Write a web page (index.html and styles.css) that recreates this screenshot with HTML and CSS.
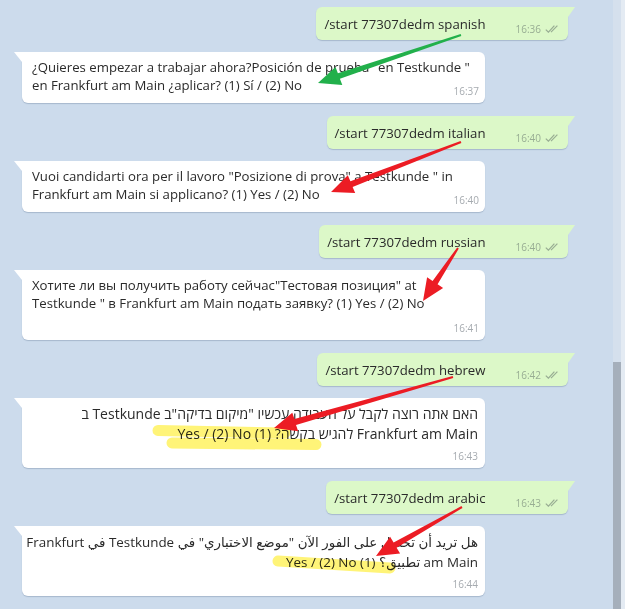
FILE: index.html
```html
<!DOCTYPE html>
<html lang="en">
<head>
<meta charset="utf-8">
<title>Chat</title>
<link rel="stylesheet" href="styles.css">
</head>
<body>
<div class="window">
  <main class="chat">
    <div class="row out first">
      <div class="bubble bubble-out"><span class="text">/start 77307dedm spanish</span><span class="meta"><span class="time">16:36</span><svg class="checks" viewBox="0 0 15 8"><path d="M0.8 4.6 L3.4 7.2 L9.4 0.6 M6 7.2 L12.4 0.6"/></svg></span></div>
    </div>
    <div class="row in">
      <div class="bubble bubble-in">
        <div class="line">¿Quieres empezar a trabajar ahora?Posición de prueba" en Testkunde "</div>
        <div class="line last"><span>en Frankfurt am Main ¿aplicar? (1) Sí / (2) No</span><span class="time">16:37</span></div>
      </div>
    </div>

    <div class="row out">
      <div class="bubble bubble-out"><span class="text">/start 77307dedm italian</span><span class="meta"><span class="time">16:40</span><svg class="checks" viewBox="0 0 15 8"><path d="M0.8 4.6 L3.4 7.2 L9.4 0.6 M6 7.2 L12.4 0.6"/></svg></span></div>
    </div>
    <div class="row in">
      <div class="bubble bubble-in">
        <div class="line">Vuoi candidarti ora per il lavoro "Posizione di prova" a Testkunde " in</div>
        <div class="line last"><span>Frankfurt am Main si applicano? (1) Yes / (2) No</span><span class="time">16:40</span></div>
      </div>
    </div>

    <div class="row out">
      <div class="bubble bubble-out"><span class="text">/start 77307dedm russian</span><span class="meta"><span class="time">16:40</span><svg class="checks" viewBox="0 0 15 8"><path d="M0.8 4.6 L3.4 7.2 L9.4 0.6 M6 7.2 L12.4 0.6"/></svg></span></div>
    </div>
    <div class="row in">
      <div class="bubble bubble-in tall">
        <div class="line">Хотите ли вы получить работу сейчас"Тестовая позиция" at</div>
        <div class="line">Testkunde " в Frankfurt am Main подать заявку? (1) Yes / (2) No</div>
        <div class="time-row"><span class="time">16:41</span></div>
      </div>
    </div>

    <div class="row out">
      <div class="bubble bubble-out"><span class="text">/start 77307dedm hebrew</span><span class="meta"><span class="time">16:42</span><svg class="checks" viewBox="0 0 15 8"><path d="M0.8 4.6 L3.4 7.2 L9.4 0.6 M6 7.2 L12.4 0.6"/></svg></span></div>
    </div>
    <div class="row in">
      <div class="bubble bubble-in tall rtl-bubble">
        <div class="rtl rtl-he" dir="rtl" lang="he">
          <div class="line">האם אתה רוצה לקבל על העבודה עכשיו "מיקום בדיקה"ב Testkunde ב</div>
          <div class="line">Frankfurt am Main להגיש בקשה? (1) Yes / (2) No</div>
        </div>
        <div class="time-row"><span class="time">16:43</span></div>
      </div>
    </div>

    <div class="row out">
      <div class="bubble bubble-out"><span class="text">/start 77307dedm arabic</span><span class="meta"><span class="time">16:43</span><svg class="checks" viewBox="0 0 15 8"><path d="M0.8 4.6 L3.4 7.2 L9.4 0.6 M6 7.2 L12.4 0.6"/></svg></span></div>
    </div>
    <div class="row in">
      <div class="bubble bubble-in tall rtl-bubble">
        <div class="rtl rtl-ar" dir="rtl" lang="ar">
          <div class="line">هل تريد أن تحصل على الفور الآن "موضع الاختباري" في Testkunde في  Frankfurt</div>
          <div class="line">am Main تطبيق؟ (1) Yes / (2) No</div>
        </div>
        <div class="time-row"><span class="time">16:44</span></div>
      </div>
    </div>
  </main>

  <div class="scrollbar">
    <div class="track"></div>
    <div class="thumb"></div>
  </div>
  <div class="edge"></div>

  <svg class="annotations" viewBox="0 0 625 609" aria-hidden="true">
    <g class="marker">
      <path d="M158 430.5 L285 433"/>
      <path d="M172 443 L316 444.5"/>
      <path d="M278 561 L390 568"/>
    </g>
    <polygon class="arrow-green" points="460.7,34 337.9,73.2 335.5,67 318,83 342.3,85 339.9,78.8 461.3,36"/>
    <polygon class="arrow-red" points="460.6,141.1 350.4,181.3 347.8,175.2 331,192 355.2,193 352.6,186.9 461.4,142.9"/>
    <polygon class="arrow-red" points="457.2,247.4 432.6,281 427.1,277.2 423,301 443.1,288 437.6,284.3 458.8,248.6"/>
    <polygon class="arrow-red" points="452.7,376 294.4,419.1 292.3,412.8 274,428 298.2,431.2 296,424.9 453.3,378"/>
    <polygon class="arrow-red" points="461.5,506.1 393.6,542.5 390.1,536.8 376,556 400.1,553.4 396.6,547.7 462.5,507.9"/>
  </svg>
</div>
</body>
</html>
```

FILE: styles.css
```css
html, body {
  margin: 0;
  padding: 0;
  height: 100%;
}

body {
  font-family: "Open Sans", "DejaVu Sans", sans-serif;
  font-size: 13.2px;
  color: #2a2a2a;
  background: #ccdbec;
  overflow: hidden;
}

.window {
  position: relative;
  display: flex;
  width: 625px;
  height: 609px;
}

.chat {
  flex: 1;
  display: flex;
  flex-direction: column;
  padding-top: 7px;
  min-width: 0;
}

.row {
  display: flex;
}

.row.out {
  justify-content: flex-end;
  padding-right: 45px;
  margin-top: 13px;
}

.row.out.first {
  margin-top: 0;
}

.row.in {
  padding-left: 22px;
  margin-top: 12px;
}

.bubble {
  position: relative;
  box-shadow: 0 1px 1px rgba(70, 95, 125, 0.28);
}

/* outgoing */
.bubble-out {
  background: #dcf8c8;
  border-radius: 6px 0 6px 6px;
  display: flex;
  align-items: flex-end;
  padding: 8px 8px 7px;
  line-height: 18px;
}

.bubble-out::before {
  content: "";
  position: absolute;
  top: 0;
  right: -7px;
  width: 7px;
  height: 10px;
  background: #dcf8c8;
  clip-path: polygon(0 0, 100% 0, 0 100%);
}

.meta {
  display: flex;
  align-items: center;
  gap: 4px;
  margin-left: 30px;
  margin-bottom: -3px;
  line-height: 14px;
}

.bubble-out .time {
  color: #98ad93;
}

.checks {
  width: 15px;
  height: 8px;
  fill: none;
  stroke: #98ad93;
  stroke-width: 1.2;
}

/* incoming */
.bubble-in {
  background: #ffffff;
  border-radius: 0 6px 6px 6px;
  width: 463px;
  box-sizing: border-box;
  padding: 6px 6px 9px 10px;
  line-height: 18px;
}

.bubble-in::before {
  content: "";
  position: absolute;
  top: 0;
  left: -8px;
  width: 8px;
  height: 10px;
  background: #ffffff;
  clip-path: polygon(0 0, 100% 0, 100% 100%);
}

.line {
  white-space: nowrap;
}

.line.last {
  display: flex;
  justify-content: space-between;
  align-items: flex-end;
}

.time {
  font-size: 10px;
  line-height: 14px;
  color: #a6abb0;
}

.line.last .time {
  margin-bottom: -4px;
}

.bubble-in.tall {
  padding-bottom: 5px;
}

.time-row {
  display: flex;
  justify-content: flex-end;
  height: 14px;
  margin-top: 9px;
  line-height: 14px;
}

.rtl-bubble {
  padding-right: 7px;
  padding-left: 4px;
}

.rtl {
  line-height: 20px;
  text-align: right;
}

.rtl-he {
  font-size: 14px;
}

.rtl-ar {
  font-size: 13.4px;
}

.rtl-bubble .time-row {
  margin-top: 5px;
}

/* scrollbar */
.scrollbar {
  width: 8px;
  display: flex;
  flex-direction: column;
}

.track {
  height: 362px;
  background: #d5e0ed;
}

.thumb {
  flex: 1;
  background: #a5afbb;
}

.edge {
  width: 4px;
  background: #e4ebf3;
}

/* annotations */
.annotations {
  position: absolute;
  left: 0;
  top: 0;
  width: 625px;
  height: 609px;
  pointer-events: none;
}

.marker path {
  fill: none;
  stroke: #fff04a;
  stroke-width: 11;
  stroke-linecap: round;
  opacity: 0.75;
  mix-blend-mode: multiply;
}

.arrow-green {
  fill: #22b04b;
}

.arrow-red {
  fill: #ec1c24;
}
```
